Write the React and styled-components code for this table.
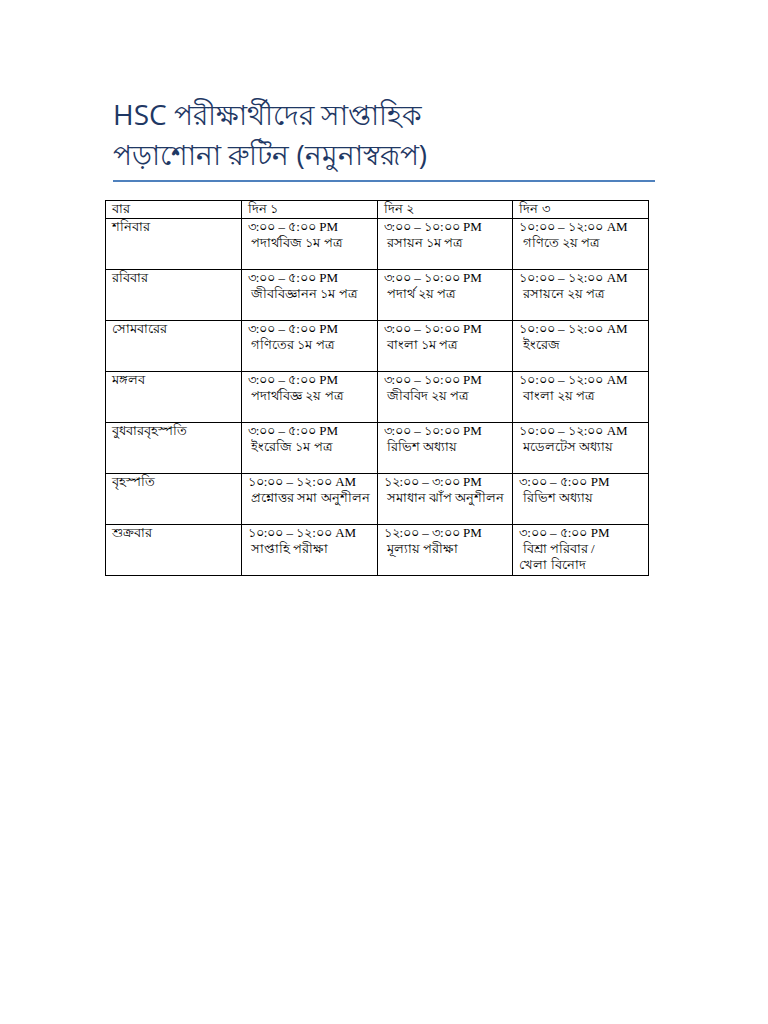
import React from 'react'
import styled, {createGlobalStyle} from 'styled-components'

const GlobalStyle = createGlobalStyle`
  html, body {
    margin: 0;
    padding: 0;
    background: #fff;
  }
`

const Page = styled.div`
  width: 768px;
  min-height: 1024px;
  padding: 94px 0 0 105px;
  box-sizing: border-box;
  background: #fff;
`

const Title = styled.h1`
  margin: 0 0 0 8px;
  width: 542px;
  padding-bottom: 6px;
  border-bottom: 2px solid #4f81bd;
  font-family: "Open Sans", "Liberation Sans", sans-serif;
  font-weight: 400;
  font-size: 28px;
  line-height: 40px;
  color: #1f3864;
`

const Table = styled.table`
  margin-top: 18px;
  border-collapse: collapse;
  width: 544px;
  table-layout: fixed;
  font-family: "Liberation Serif", serif;
  font-size: 13px;
  line-height: 16px;
  color: #000;
`

const Cell = styled.td`
  border: 1px solid #000;
  padding: 0 6px;
  vertical-align: top;
  height: ${p => (p.$head ? '18px' : '51px')};
  box-sizing: border-box;
`

const Time = styled.div`
  white-space: nowrap;
`

const Subject = styled.div`
  white-space: pre-wrap;
`

const head = ['বার', 'দিন ১', 'দিন ২', 'দিন ৩']

const rows = [
  ['শনিবার', ['৩:০০ – ৫:০০ PM', ' পদার্থবিজ ১ম পত্র'], ['৩:০০ – ১০:০০ PM', ' রসায়ন ১ম পত্র'], ['১০:০০ – ১২:০০ AM', ' গণিতে ২য় পত্র']],
  ['রবিবার', ['৩:০০ – ৫:০০ PM', ' জীববিজ্ঞানন ১ম পত্র'], ['৩:০০ – ১০:০০ PM', ' পদার্থ ২য় পত্র'], ['১০:০০ – ১২:০০ AM', ' রসায়নে ২য় পত্র']],
  ['সোমবারের', ['৩:০০ – ৫:০০ PM', ' গণিতের ১ম পত্র'], ['৩:০০ – ১০:০০ PM', ' বাংলা ১ম পত্র'], ['১০:০০ – ১২:০০ AM', ' ইংরেজ']],
  ['মঙ্গলব', ['৩:০০ – ৫:০০ PM', ' পদার্থবিজ্ঞ ২য় পত্র'], ['৩:০০ – ১০:০০ PM', ' জীববিদ ২য় পত্র'], ['১০:০০ – ১২:০০ AM', ' বাংলা ২য় পত্র']],
  ['বুধবারবৃহস্পতি', ['৩:০০ – ৫:০০ PM', ' ইংরেজি ১ম পত্র'], ['৩:০০ – ১০:০০ PM', ' রিভিশ অধ্যায়'], ['১০:০০ – ১২:০০ AM', ' মডেলটেস অধ্যায়']],
  ['বৃহস্পতি', ['১০:০০ – ১২:০০ AM', ' প্রশ্নোত্তর সমা অনুশীলন'], ['১২:০০ – ৩:০০ PM', ' সমাধান ঝাঁপ অনুশীলন'], ['৩:০০ – ৫:০০ PM', ' রিভিশ অধ্যায়']],
  ['শুক্রবার', ['১০:০০ – ১২:০০ AM', ' সাপ্তাহি পরীক্ষা'], ['১২:০০ – ৩:০০ PM', ' মূল্যায় পরীক্ষা'], ['৩:০০ – ৫:০০ PM', ' বিশ্রা পরিবার /\nখেলা বিনোদ']],
]

export default function App() {
  return (
    <>
      <GlobalStyle />
      <Page>
        <Title>
          HSC পরীক্ষার্থীদের সাপ্তাহিক
          <br />
          পড়াশোনা রুটিন (নমুনাস্বরূপ)
        </Title>
        <Table>
          <tbody>
            <tr>
              {head.map(h => (
                <Cell key={h} $head>{h}</Cell>
              ))}
            </tr>
            {rows.map(([day, ...slots]) => (
              <tr key={day}>
                <Cell>{day}</Cell>
                {slots.map(([time, subject], i) => (
                  <Cell key={i}>
                    <Time>{time}</Time>
                    <Subject>{subject}</Subject>
                  </Cell>
                ))}
              </tr>
            ))}
          </tbody>
        </Table>
      </Page>
    </>
  )
}
